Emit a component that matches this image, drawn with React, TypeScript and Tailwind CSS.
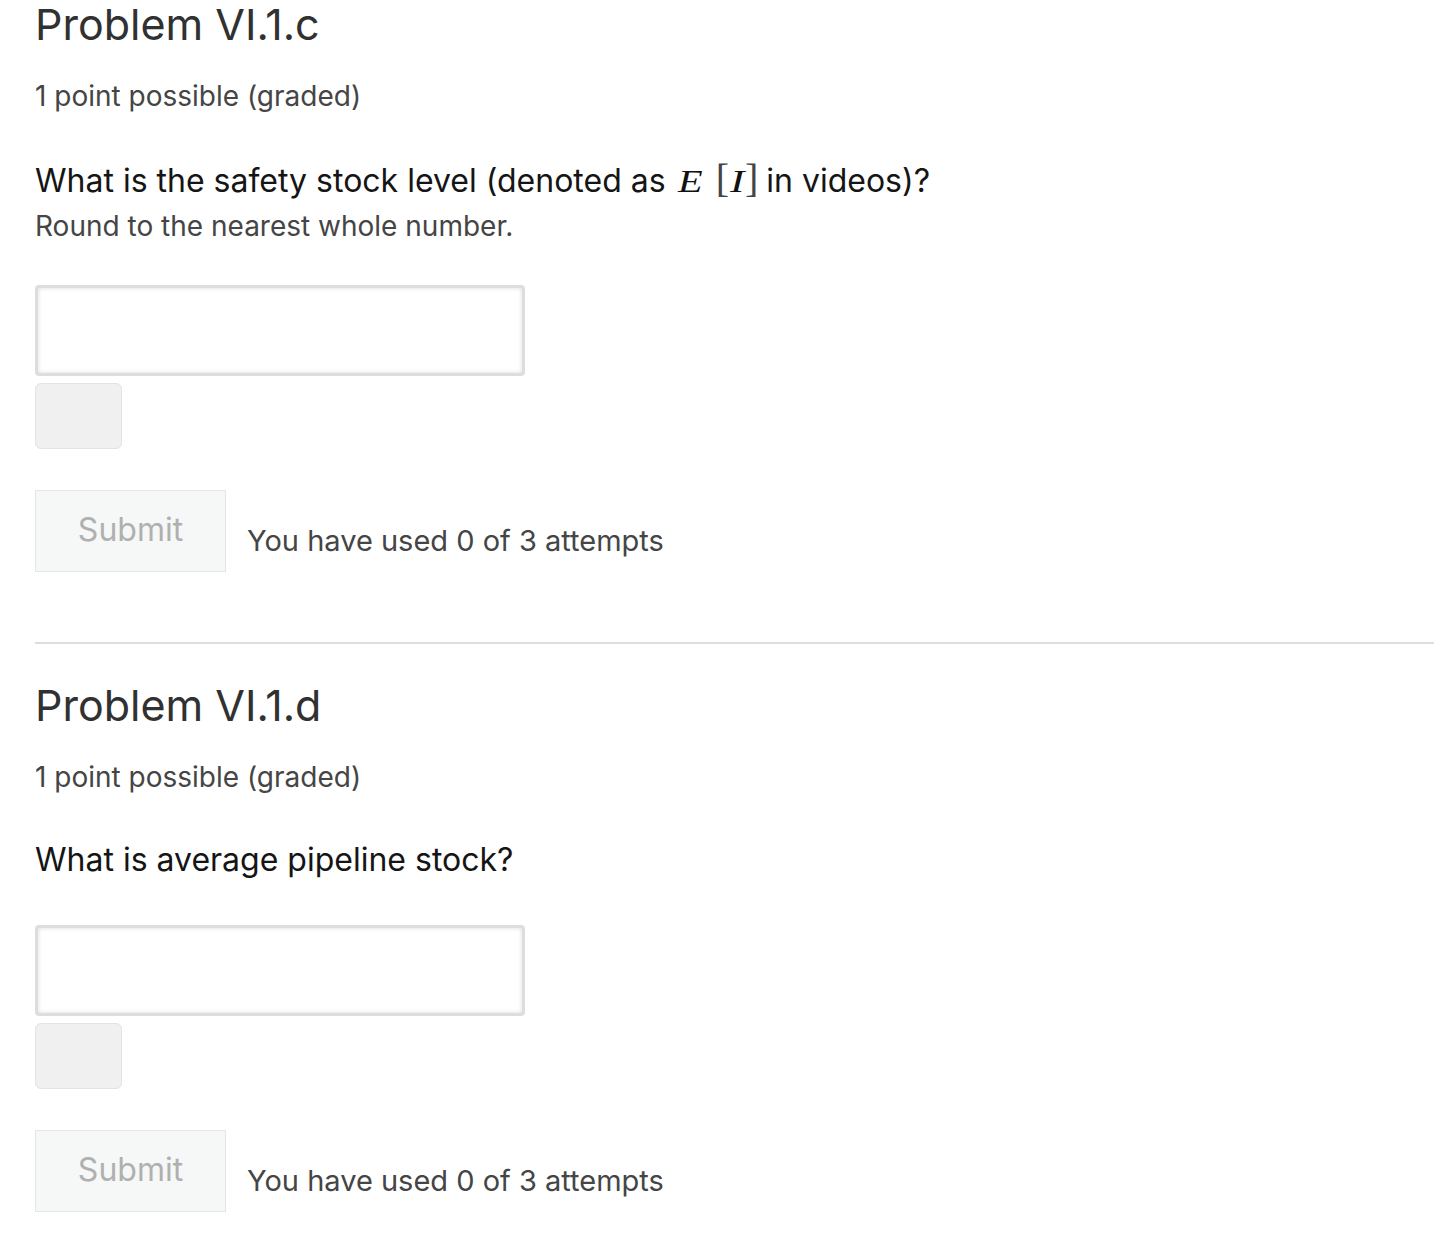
import React from "react";

function Problem({
  title,
  question,
  hint,
  qMt,
  inputMt,
}: {
  title: string;
  question: React.ReactNode;
  hint?: string;
  qMt: string;
  inputMt: string;
}) {
  return (
    <div className="flex flex-col">
      <h3 className="text-[43px] leading-[48px] text-[#313131] font-normal">{title}</h3>
      <div className="mt-[32px] text-[28px] leading-[32px] text-[#454545]">1 point possible (graded)</div>
      <div className={qMt + " text-[32px] leading-[40px] text-[#151515] whitespace-nowrap"}>{question}</div>
      {hint ? <div className="mt-[7px] text-[28px] leading-[36px] text-[#454545]">{hint}</div> : null}
      <div className={inputMt}>
        <div className="w-[490px] h-[91px] rounded-[4px] border-[3px] border-[#dddddd] bg-white shadow-[inset_0_0_4px_rgba(0,0,0,0.15)]" />
        <div className="mt-[7px] w-[87px] h-[66px] rounded-[6px] border-[1.5px] border-[#e3e3e3] bg-[#f0f0f0]" />
      </div>
      <div className="mt-[41px] flex items-center gap-[21px]">
        <div className="w-[191px] h-[82px] border-[1.5px] border-[#e6e6e6] bg-[#f6f7f7] flex items-center justify-center text-[32px] leading-[39px] text-[#b0b0b0] pb-[3px]">
          Submit
        </div>
        <div className="text-[29px] leading-[35px] text-[#454545] pt-[18px]">You have used 0 of 3 attempts</div>
      </div>
    </div>
  );
}

const serif = { fontFamily: "'Liberation Serif', 'DejaVu Serif', serif" };

export default function App() {
  return (
    <div className="bg-white min-h-[1234px] pl-[35px]" style={{ fontFamily: "Inter, 'Noto Sans', sans-serif" }}>
      <Problem
        title="Problem VI.1.c"
        qMt="mt-[49px]"
        inputMt="mt-[41px]"
        question={
          <span>
            What is the safety stock level (denoted as{" "}
            <span
              style={serif}
              className="inline-block w-[30px] ml-[3px] italic text-[31px] leading-[20px] text-[#111] scale-x-[1.3] origin-left"
            >
              E
            </span>
            <span style={serif} className="inline-block ml-[8px] text-[40px] leading-[20px] font-light text-[#444]">[</span>
            <span
              style={serif}
              className="inline-block w-[15px] ml-[1px] italic text-[31px] leading-[20px] text-[#111] scale-x-[1.4] origin-left"
            >
              I
            </span>
            <span style={serif} className="inline-block text-[40px] leading-[20px] text-[#444]">]</span>
            <span className="inline-block w-[8px]" />
            in videos)?
          </span>
        }
        hint="Round to the nearest whole number."
      />
      <div className="mt-[70px] h-[2px] bg-[#dddddd]" />
      <div className="mt-[37px]">
        <Problem title="Problem VI.1.d" qMt="mt-[47px]" inputMt="mt-[45px]" question="What is average pipeline stock?" />
      </div>
    </div>
  );
}
